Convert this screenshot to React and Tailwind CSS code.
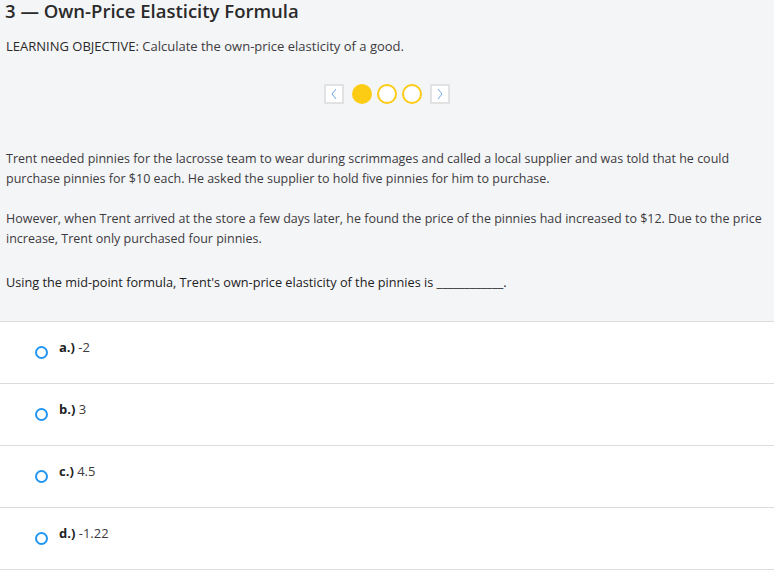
import React from "react";

const options = [
  { k: "a.)", v: "-2" },
  { k: "b.)", v: "3" },
  { k: "c.)", v: "4.5" },
  { k: "d.)", v: "-1.22" },
];

export default function App() {
  return (
    <div className="w-[774px] h-[571px] bg-white text-[#3d3a40] overflow-hidden" style={{ fontFamily: '"Open Sans", sans-serif' }}>
      <div className="bg-[#f4f5f7] border-b border-[#dcdcdc] h-[322px] px-[6px]">
        <h1 className="text-[18.5px] font-semibold leading-[22px] -ml-[1px] text-[#2a2a2a]">3 — Own-Price Elasticity Formula</h1>
        <p className="text-[13px] leading-[16px] mt-[16px]">
          <span className="font-medium text-[#2a2a2a]">LEARNING OBJECTIVE:</span> Calculate the own-price elasticity of a good.
        </p>
        <div className="flex items-center justify-center gap-[6px] mt-[30px] h-[20px]">
          <button className="w-[20px] h-[20px] bg-white border-2 border-[#e2e2e2] flex items-center justify-center">
            <svg width="8" height="12" viewBox="0 0 8 12"><path d="M6 1 L2 6 L6 11" fill="none" stroke="#6ea6e8" strokeWidth="1" /></svg>
          </button>
          <span className="w-[20px] h-[20px] rounded-full bg-[#fccb14] ml-[2px]"></span>
          <span className="w-[20px] h-[20px] rounded-full bg-white border-2 border-[#fccb14] -ml-[1px]"></span>
          <span className="w-[20px] h-[20px] rounded-full bg-white border-2 border-[#fccb14] -ml-[1px]"></span>
          <button className="w-[20px] h-[20px] bg-white border-2 border-[#e2e2e2] flex items-center justify-center ml-[2px]">
            <svg width="8" height="12" viewBox="0 0 8 12"><path d="M2 1 L6 6 L2 11" fill="none" stroke="#6ea6e8" strokeWidth="1" /></svg>
          </button>
        </div>
        <p className="text-[12.5px] leading-[20px] mt-[45px]">
          Trent needed pinnies for the lacrosse team to wear during scrimmages and called a local supplier and was told that he could purchase pinnies for $10 each. He asked the supplier to hold five pinnies for him to purchase.
        </p>
        <p className="text-[12.5px] leading-[20px] mt-[20px]">
          However, when Trent arrived at the store a few days later, he found the price of the pinnies had increased to $12. Due to the price increase, Trent only purchased four pinnies.
        </p>
        <p className="text-[12.7px] leading-[20px] mt-[23px] text-[#222]">
          Using the mid-point formula, Trent's own-price elasticity of the pinnies is ____________.
        </p>
      </div>
      {options.map((o) => (
        <div key={o.k} className="h-[62px] border-b border-[#dcdcdc] flex items-start pl-[35px] pt-[16px]">
          <span className="w-[13px] h-[13px] rounded-full border-2 border-[#2196f3] mt-[8px] shrink-0"></span>
          <span className="ml-[11px] text-[13px] leading-[18px]">
            <span className="font-bold text-[#222]">{o.k}</span> {o.v}
          </span>
        </div>
      ))}
    </div>
  );
}
